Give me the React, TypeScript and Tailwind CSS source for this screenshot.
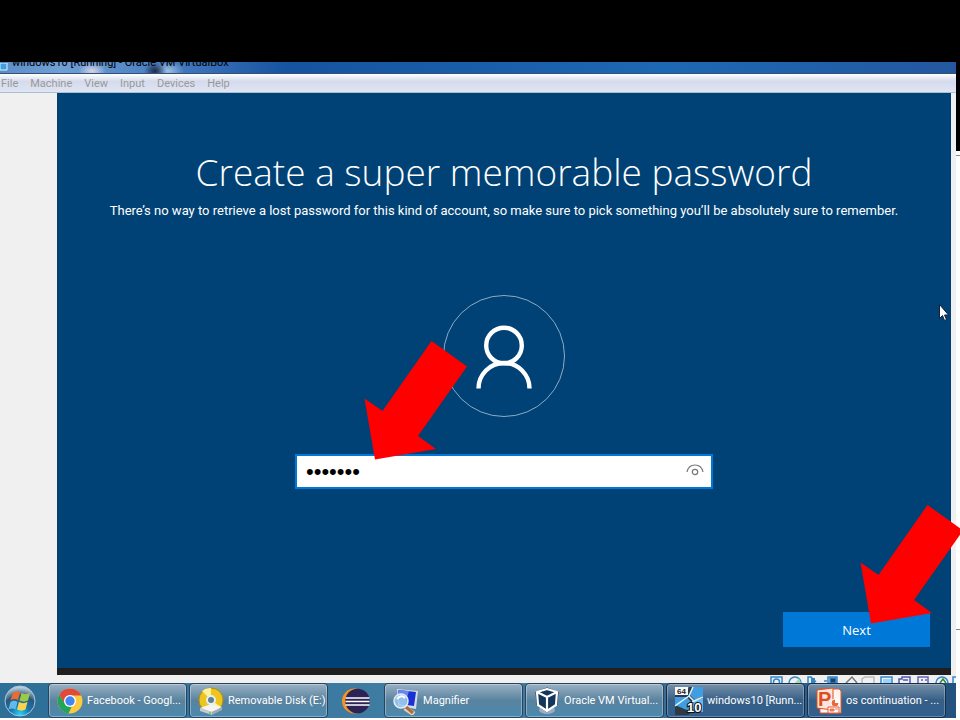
import type { ReactNode } from 'react'

const menus = ['File', 'Machine', 'View', 'Input', 'Devices', 'Help']

function UserIcon() {
  return (
    <svg viewBox="0 0 122 122" className="size-[122px]" fill="none" aria-hidden="true">
      <circle cx="61" cy="61" r="60.5" stroke="#8fabc2" />
      <circle cx="61" cy="50.5" r="17.800" stroke="#fff" strokeWidth="4.4" />
      <path d="M35.5 93.500a25.500 25.500 0 0 1 51 0" stroke="#fff" strokeWidth="4.4" />
    </svg>
  )
}

function EyeIcon() {
  return (
    <svg viewBox="0 0 18 12" className="h-3 w-[18px]" fill="none" stroke="#777" strokeWidth="1.2" aria-hidden="true">
      <path d="M1 8C2 3 5 1 9 1s7 2 8 7" />
      <circle cx="9" cy="8" r="2.700" />
    </svg>
  )
}

function RedArrow() {
  return (
    <svg viewBox="0 0 104 120" className="h-[120px] w-[104px]" aria-hidden="true">
      <path d="M67.500 1 103 26.500 54 96l18 13-61 10.500L.5 58.500 18.500 71Z" fill="#f00" />
    </svg>
  )
}

function StartOrb() {
  return (
    <svg viewBox="0 0 32 32" className="size-8" aria-hidden="true">
      <defs>
        <radialGradient id="orb" cx=".5" cy=".95" r=".9">
          <stop offset="0" stopColor="#25d5ff" />
          <stop offset=".35" stopColor="#1a78ae" />
          <stop offset=".7" stopColor="#2c5679" />
          <stop offset="1" stopColor="#b9cbd9" />
        </radialGradient>
      </defs>
      <circle cx="16" cy="16" r="15" fill="url(#orb)" stroke="#a8c6da" />
      <path d="M9 8c3-2 5-2 7-.5l-2 7.500c-2-1.500-4-1.500-7.500 0Z" fill="#ed6a31" />
      <path d="M17.500 8c3 1.500 5 1.500 8.500 0l-2 7.500c-3 1.500-5 1.500-8.500 0Z" fill="#9bcb45" />
      <path d="M6.500 17c3-2 5-1.500 7 0l-2 7.500c-2-1.500-4-1.500-7 0Z" fill="#63b8ec" />
      <path d="M15 17c3 1.500 5 1.500 8.500 0l-2 7.500c-3 1.500-5 1.500-8.500 0Z" fill="#fbd34d" />
    </svg>
  )
}

function ChromeIcon() {
  return (
    <svg viewBox="0 0 26 26" className="size-[26px]" aria-hidden="true">
      <circle cx="13" cy="13" r="12.500" fill="#fbcb3f" />
      <path d="M2.200 6.700A12.500 12.500 0 0 1 24.200 7.500L13 7.500 7.800 16Z" fill="#df4a3c" />
      <path d="M2.200 6.700 8 16l6.500 3L11.500 25.400A12.500 12.500 0 0 1 2.200 6.700Z" fill="#23a35b" />
      <circle cx="13" cy="13" r="6" fill="#fff" />
      <circle cx="13" cy="13" r="4.700" fill="#4285f4" />
    </svg>
  )
}

function DiskIcon() {
  return (
    <svg viewBox="0 0 26 28" className="h-7 w-[26px]" aria-hidden="true">
      <circle cx="13" cy="13" r="12" fill="#eec51d" stroke="#b98e08" />
      <path d="M13 13 4 4a12 12 0 0 1 9-3Z" fill="#fff29a" />
      <path d="M13 13 23 20a12 12 0 0 1-5 4Z" fill="#fff29a" />
      <circle cx="13" cy="13" r="5" fill="#e8eef0" />
      <circle cx="13" cy="13" r="3" fill="#5d8193" />
      <path d="m2 21 11-4 11 3-10 5Z" fill="#f2f4f7" />
      <path d="m2 21 12 4v3L2 24Z" fill="#c5cad4" />
      <path d="m14 25 10-5v3l-10 5Z" fill="#a3a9b7" />
      <circle cx="12" cy="26" r="1" fill="#45d43d" />
    </svg>
  )
}

function EclipseIcon() {
  return (
    <svg viewBox="0 0 28 26" className="h-[26px] w-7" aria-hidden="true">
      <ellipse cx="12.500" cy="13" rx="12.500" ry="12.500" fill="#f7941e" />
      <circle cx="15.500" cy="13" r="12.300" fill="#2c2255" />
      <path d="M3.500 10h24M3.500 13.500h24M3.500 17h24" stroke="#fff" strokeWidth="1.600" />
    </svg>
  )
}

function MagnifierIcon() {
  return (
    <svg viewBox="0 0 26 28" className="h-7 w-[26px]" aria-hidden="true">
      <path d="m4 2 21 2-2 18-18-3Z" fill="#d5dce7" />
      <path d="m5 3 18 2-2 14-14-2Z" fill="#1933d2" />
      <path d="m5 3 11 1-4 14-5-1Z" fill="#6587ef" />
      <path d="m12 21 9 6" stroke="#e6d2bd" strokeWidth="5" />
      <path d="m13 20 7 6" stroke="#ad6c35" strokeWidth="3" />
      <circle cx="8" cy="14" r="7" fill="#9bc9ef" fillOpacity=".85" stroke="#e4edf5" strokeWidth="1.500" />
      <path d="M4 12q4-5 8-1" stroke="#fff" strokeWidth="2" fill="none" />
    </svg>
  )
}

function VirtualBoxIcon() {
  return (
    <svg viewBox="0 0 26 28" className="h-7 w-[26px]" aria-hidden="true">
      <ellipse cx="13" cy="23" rx="8" ry="4" fill="#9cacc4" />
      <path d="M2 5 13 1l11 4-1 13-10 7L3 18Z" fill="#13365a" stroke="#122b4a" />
      <path d="m3 5 10-3 10 3-10 5ZM3 5l1 13 9 6V10M23 5l-1 13-9 6" fill="none" stroke="#fff" strokeWidth="2.200" strokeLinejoin="round" />
    </svg>
  )
}

function Windows10Icon() {
  return (
    <svg viewBox="0 0 28 28" className="size-7" aria-hidden="true">
      <path d="M0 8h10l4-8h14v13L15 27H0Z" fill="#303943" />
      <path d="M18 0h10v9l-8 4-5-5ZM0 10h12l4 5-2 9L0 18Z" fill="#419de1" />
      <path d="M28 11v14H16l3-11Z" fill="#67b8ee" />
      <path d="m18 0-4 9 5 5 9-4M14 9 0 19M18 14l-3 11" stroke="#d7f2ff" strokeWidth="1.500" fill="none" />
      <path d="M0 20 14 26v2H0Z" fill="#303943" />
      <path d="M0 0h13v8H0Z" fill="#f8f8f8" />
      <text x="2" y="7" fill="#222" className="font-['Liberation_Sans'] text-[8px] font-bold">64</text>
      <text x="12" y="25" fill="#fff" stroke="#111" strokeWidth="2" paintOrder="stroke" className="font-['Liberation_Sans'] text-[13px] font-bold">10</text>
    </svg>
  )
}

function PowerPointIcon() {
  return (
    <svg viewBox="0 0 26 26" className="size-[26px]" aria-hidden="true">
      <path d="M4 1h19l2 2v22H4Z" fill="#fff5ee" stroke="#e15b2f" />
      <path d="M1 2 17 0v22L1 20Z" fill="#f9e5dc" stroke="#df4e20" />
      <text x="2" y="18" fill="#df4e20" className="font-['Liberation_Sans'] text-[20px] font-bold">P</text>
      <circle cx="19" cy="15" r="4" fill="#ea683c" stroke="#fff" />
      <path d="M19 15v-5a5 5 0 0 1 5 5Z" fill="#fff" />
      <path d="M12 19h11v6H12Z" fill="#fff" stroke="#e15b2f" />
      <path d="M14 21h4v2h-4ZM19 21h3" fill="#ec7652" stroke="#ec7652" />
    </svg>
  )
}

function StatusIcons() {
  return (
    <svg viewBox="0 0 186 8" className="h-2 w-[186px]" fill="none" stroke="#3486c8" strokeWidth="1.500" aria-hidden="true">
      <path d="M1 8V2h11v6" />
      <circle cx="6.500" cy="7" r="3" />
      <circle cx="25" cy="8" r="6" />
      <path d="M25 8l4-5 2 5Z" fill="#9fddb0" stroke="none" />
      <path d="M38 8V2h3l5 5M58 8V2h9v6M54 6h3" />
      <path d="M41 3h4v5h-4Z" fill="#3486c8" stroke="none" />
      <path d="M60 3h6v5h-6Z" fill="#223e66" />
      <path d="m76 8 6-6 5 6" stroke="#777" />
      <path d="M92 8V4l3-2h9v6" stroke="#bbb" />
      <path d="M111 8V2h11v6" />
      <path d="M113 4h8v4h-8Z" fill="#9bd3ff" stroke="none" />
      <path d="M129 8V4h3V2h8v6M133 5h5" stroke="#5057b5" />
      <path d="M148 8V2h10v6M151 5h2M155 5h2" stroke="#6661b5" />
      <circle cx="172" cy="8" r="6" />
      <path d="m170 8 3-4 3 4" stroke="#298b34" />
      <path d="M183 8V2h3" />
    </svg>
  )
}

type Task = { label: string; icon: ReactNode; grow: string; style: string }

const framed = 'border border-[#25445f] bg-linear-to-b from-[#9ab0c3] via-[#58839f] to-[#4a89ad] shadow-[inset_0_0_0_1px_#ffffff55]'
const dark = 'border border-[#142d4b] bg-linear-to-b from-[#7790a8] via-[#365f87] to-[#315f8d] shadow-[inset_0_0_0_1px_#ffffff44]'

const tasks: Task[] = [
  { label: 'Facebook - Googl...', icon: <ChromeIcon />, grow: 'flex-[139]', style: framed },
  { label: 'Removable Disk (E:)', icon: <DiskIcon />, grow: 'flex-[139]', style: framed },
  { label: '', icon: <EclipseIcon />, grow: 'flex-[54]', style: 'border border-transparent' },
  { label: 'Magnifier', icon: <MagnifierIcon />, grow: 'flex-[139]', style: framed },
  { label: 'Oracle VM Virtual...', icon: <VirtualBoxIcon />, grow: 'flex-[139]', style: framed },
  { label: 'windows10 [Runn...', icon: <Windows10Icon />, grow: 'flex-[139]', style: dark },
  { label: 'os continuation - ...', icon: <PowerPointIcon />, grow: 'flex-[139]', style: dark },
]

function Taskbar() {
  return (
    <nav className="mr-1 flex h-[35px] shrink-0 bg-linear-to-r from-[#2d6f97] via-[#437fa5] to-[#24517e]" aria-label="Taskbar">
      <button className="flex w-12 shrink-0 items-center pl-1" aria-label="Start">
        <StartOrb />
      </button>
      <div className="mr-2.5 flex min-w-0 flex-1 gap-0.5">
        {tasks.map(({ label, icon, grow, style }) => (
          <button
            key={label || 'Eclipse'}
            aria-label={label || 'Eclipse'}
            className={`${grow} ${style} flex min-w-0 items-center gap-1 overflow-hidden rounded-sm font-['Roboto',sans-serif] whitespace-nowrap text-[11px] text-white ${label ? 'pl-2' : 'justify-center'}`}
          >
            <span className="shrink-0">{icon}</span>
            {label && <span className="pt-0.5">{label}</span>}
          </button>
        ))}
      </div>
    </nav>
  )
}

function PasswordSetup() {
  return (
    <main className="flex min-w-0 flex-1 flex-col border-b-[7px] border-[#1f1f1f] bg-[#004275] text-white">
      <header className="pt-[53px] text-center">
        <h1 className="text-[37px] leading-[52px] font-light">Create a super memorable password</h1>
        <p className="pt-px font-['Roboto',sans-serif] text-[13px] leading-6">
          There’s no way to retrieve a lost password for this kind of account, so make sure to pick something you’ll be absolutely sure to remember.
        </p>
      </header>
      <div className="mt-[72px] flex justify-center">
        <UserIcon />
      </div>
      <form className="flex flex-1 flex-col" onSubmit={e => e.preventDefault()}>
        <div className="relative mx-auto mt-[37px] flex h-[35px] w-[418px] max-w-full items-center border-2 border-[#0078d7] bg-white pr-[7px]">
          <input
            type="password"
            defaultValue="letmein"
            aria-label="Password"
            className="h-full min-w-0 flex-1 bg-transparent pl-[9px] font-['Liberation_Sans',sans-serif] text-[22px] text-black outline-none"
          />
          <button type="button" aria-label="Show password" className="pb-1">
            <EyeIcon />
          </button>
          <div className="pointer-events-none absolute -top-[116px] left-[67px]">
            <RedArrow />
          </div>
        </div>
        <div className="relative mt-auto mr-[21px] mb-[21px] self-end">
          <button className="h-[35px] w-[147px] bg-[#0078d7] pt-0.5 text-[13px]">Next</button>
          <div className="pointer-events-none absolute bottom-[23px] left-[77px]">
            <RedArrow />
          </div>
        </div>
      </form>
    </main>
  )
}

export default function App() {
  return (
    <div className="relative flex min-h-screen flex-col overflow-hidden bg-white font-['Open_Sans','Noto_Sans',sans-serif]">
      <div className="h-[62px] shrink-0 bg-black" />
      <div className="flex flex-1">
        <section className="flex min-w-0 flex-1 flex-col bg-[#f0f0f0]">
          <div className="flex h-3 items-end overflow-hidden border-b border-[#31517b] bg-[radial-gradient(14px_9px_at_92px_9px,#d8d4e8,transparent),radial-gradient(11px_9px_at_155px_9px,#1c2844,transparent),radial-gradient(16px_10px_at_168px_9px,#9dbfe2,transparent),linear-gradient(to_right,#5c8cc6,#6f9fd4_60px,#3f74bb_190px,#1653a0_30%,#1d68b4_70%,#2457a0)] pb-0.5">
            <svg viewBox="0 0 8 8" className="size-2 shrink-0" aria-hidden="true">
              <path d="M0 0h7v7H0Z" fill="#419de1" stroke="#d7f2ff" />
            </svg>
            <span className="ml-1 font-['Roboto',sans-serif] text-[11px] leading-4 whitespace-nowrap text-black">windows10 [Running] - Oracle VM VirtualBox</span>
          </div>
          <nav className="flex h-[19px] items-center gap-3 border-b border-[#a9bfd4] bg-linear-to-b from-white via-[#d5dbed] via-40% to-[#e0e5f3] pt-[3px] pl-px font-['Roboto',sans-serif] text-[11px] text-[#999]">
            {menus.map(name => (
              <button key={name}>{name}</button>
            ))}
          </nav>
          <div className="flex flex-1 pr-[5px] pl-[57px]">
            <PasswordSetup />
          </div>
          <footer className="flex h-2 justify-end overflow-hidden">
            <StatusIcons />
          </footer>
        </section>
        <aside className="w-1 shrink-0 bg-white">
          <div className="h-[89px] bg-black" />
          <div className="mt-1 h-[475px] border-t border-b border-[#888]" />
        </aside>
      </div>
      <Taskbar />
      <div className="h-0.5 shrink-0" />
      <svg viewBox="0 0 10 17" className="pointer-events-none absolute top-[304px] right-[11px] h-[17px] w-2.5" aria-hidden="true">
        <path d="M.5.5v14l3-3 2 5 2-1-2-4.500h4Z" fill="#fff" stroke="#14213a" />
      </svg>
    </div>
  )
}
